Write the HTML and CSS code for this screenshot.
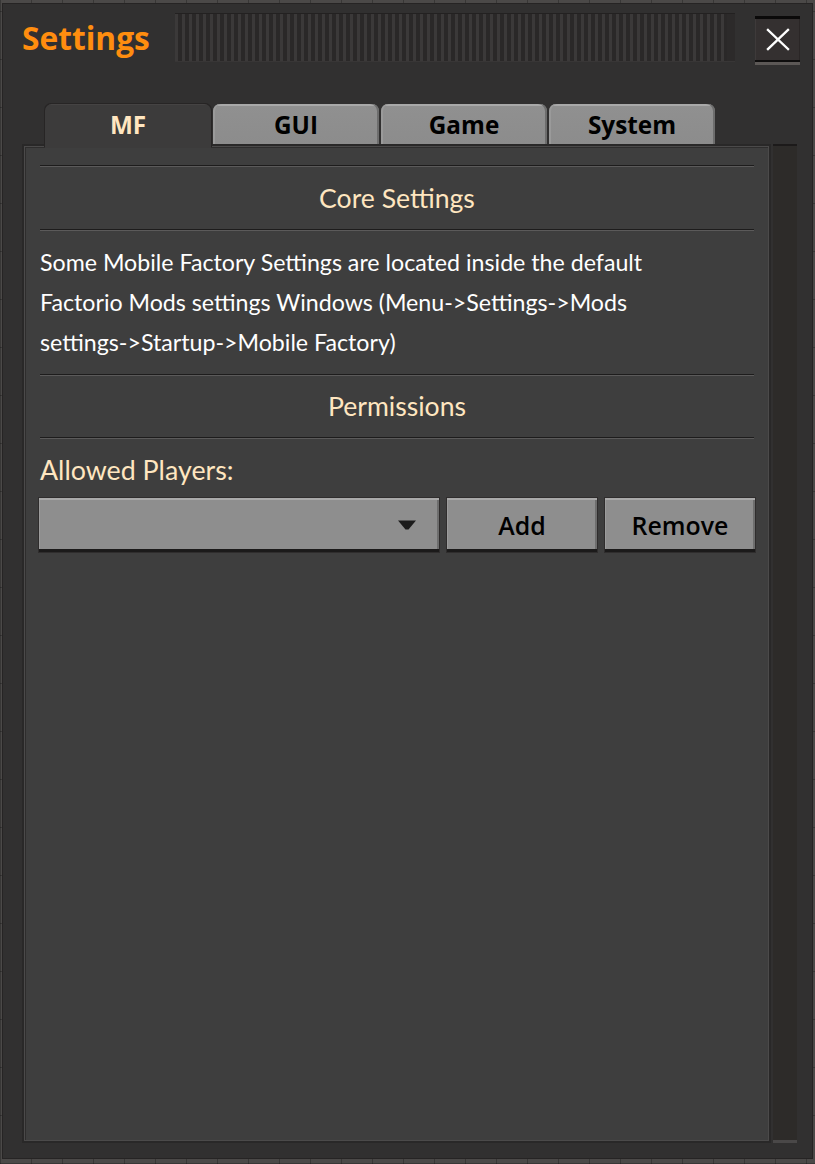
FILE: index.html
```html
<!DOCTYPE html>
<html lang="en">
<head>
<meta charset="utf-8">
<title>Settings</title>
<link rel="stylesheet" href="styles.css">
</head>
<body>
<div class="window">
  <header class="titlebar">
    <h1 class="title">Settings</h1>
    <div class="drag-handle"></div>
    <button class="close-btn" aria-label="Close">
      <svg width="24" height="24" viewBox="0 0 24 24"><path d="M2 2 L22 21 M22 2 L2 21" stroke="#ffffff" stroke-width="2.4" stroke-linecap="square" fill="none"/></svg>
    </button>
  </header>
  <nav class="tabs">
    <div class="tab active">MF</div>
    <div class="tab">GUI</div>
    <div class="tab">Game</div>
    <div class="tab">System</div>
  </nav>
  <div class="body-row">
    <section class="panel">
      <div class="sep"></div>
      <h2 class="section-title">Core Settings</h2>
      <div class="sep"></div>
      <p class="desc">Some Mobile Factory Settings are located inside the default Factorio Mods settings Windows (Menu-&gt;Settings-&gt;Mods settings-&gt;Startup-&gt;Mobile Factory)</p>
      <div class="sep"></div>
      <h2 class="section-title perm">Permissions</h2>
      <div class="sep"></div>
      <div class="label">Allowed Players:</div>
      <div class="controls">
        <div class="dropdown">
          <svg class="arrow" width="20" height="10" viewBox="0 0 20 10"><path d="M1 0.5 H19 L11.5 9.5 H8.5 Z" fill="#1c1c1c"/></svg>
        </div>
        <button class="btn">Add</button>
        <button class="btn">Remove</button>
      </div>
    </section>
    <div class="scroll-strip"></div>
  </div>
</div>
</body>
</html>
```
FILE: styles.css
```css
* { box-sizing: border-box; }

html, body { height: 100%; }

body {
  margin: 0;
  padding: 4px 3px 6px 3px;
  background-color: #4b4948;
  background-image:
    repeating-linear-gradient(90deg, rgba(0,0,0,0.25) 0 1px, transparent 1px 31px),
    repeating-linear-gradient(0deg, rgba(0,0,0,0.25) 0 1px, transparent 1px 48px);
  font-family: "Lato", "Open Sans", sans-serif;
}

.window {
  height: 1154px;
  background: #313030;
  display: flex;
  flex-direction: column;
  box-shadow: 0 0 0 1px #262424;
}

/* ---------- title bar ---------- */
.titlebar {
  display: flex;
  align-items: center;
  height: 58px;
  padding: 9px 12px 0 19px;
}

.title {
  margin: 0;
  font-family: "Open Sans", sans-serif;
  font-weight: 700;
  font-size: 31.7px;
  line-height: 49px;
  color: #ff8d0f;
  letter-spacing: 0;
}

.drag-handle {
  flex: 1;
  height: 49px;
  margin-left: 25px;
  margin-right: 20px;
  background-color: #2c2a2a;
  background-image: repeating-linear-gradient(90deg,
    #3b3939 0 3px, #2a2828 3px 7px);
  background-size: calc(100% - 8px) 100%;
  background-repeat: no-repeat;
  box-shadow: inset 0 1px 0 #232121, inset 0 -1px 0 #383636;
}

.close-btn {
  width: 45px;
  height: 46px;
  margin: 3px 0 0 0;
  padding: 0;
  display: flex;
  align-items: center;
  justify-content: center;
  background: #343030;
  border: none;
  border-top: 3px solid #0b0a0a;
  border-bottom: 2px solid #0e0d0d;
  box-shadow: 0 3px 0 #5c5856, inset 1px 0 0 #3e3a3a, inset -1px 0 0 #2a2626;
}

/* ---------- tabs ---------- */
.tabs {
  display: flex;
  gap: 2px;
  height: 40px;
  margin-top: 42px;
  padding-left: 42px;
}

.tab {
  width: 166px;
  height: 40px;
  border-radius: 7px 7px 0 0;
  background: linear-gradient(#a9a9a9 0 2px, #909090 2px, #8c8c8c 100%);
  box-shadow: inset 2px 0 0 #9a9a9a, inset -2px 0 0 #6d6d6d;
  font-family: "Open Sans", sans-serif;
  font-weight: 700;
  font-size: 24.3px;
  line-height: 41px;
  text-align: center;
  color: #000;
}

.tab.active {
  position: relative;
  z-index: 1;
  height: 44px;
  background: linear-gradient(#454343 0 1px, #3c3b3b 1px);
  box-shadow: -1px -1px 0 #272525, 1px -1px 0 #272525;
  color: #ffe6c0;
}

/* ---------- body ---------- */
.body-row {
  display: flex;
  height: 999px;
  padding-left: 19px;
}

.panel {
  width: 749px;
  height: 999px;
  background: #3e3e3e;
  border: 2px solid #292828;
  box-shadow: inset 1px 1px 0 #4b4a4a, inset -1px -1px 0 #4b4a4a, inset 2px 2px 0 #2e2d2d;
  padding: 19px 15px 0 16px;
  display: flex;
  flex-direction: column;
}

.scroll-strip {
  width: 24px;
  margin-left: 2px;
  height: 999px;
  background: #2d2b29;
  border-top: 2px solid #1c1a1a;
  box-shadow: inset 0 -3px 0 #4a4848;
}

.sep {
  height: 2px;
  border-top: 1px solid #1d1c1c;
  border-bottom: 1px solid #5b5a5a;
}

.section-title {
  margin: 0;
  height: 62px;
  font-family: "Lato", sans-serif;
  font-weight: 400;
  font-size: 26.6px;
  line-height: 62px;
  text-align: center;
  color: #ffe6c0;
}

.section-title.perm {
  height: 61px;
  line-height: 61px;
}

.desc {
  margin: 11px 0 12px 0;
  max-width: 660px;
  font-size: 23.2px;
  line-height: 40px;
  color: #ffffff;
}

.label {
  margin-top: 13px;
  font-size: 26.8px;
  line-height: 36px;
  color: #ffe6c0;
}

.controls {
  display: flex;
  gap: 8px;
  margin: 10px -1px 0 -1px;
  height: 54px;
}

.dropdown,
.btn {
  height: 54px;
  background: #8e8e8e;
  border: none;
  border-top: 2px solid #aaaaaa;
  border-bottom: 3px solid #1b1a1a;
  box-shadow: inset 1px 0 0 #9c9c9c, inset -2px 0 0 #6e6e6e, 0 0 0 1px #2f2d2d;
}

.dropdown {
  width: 400px;
  display: flex;
  align-items: center;
  justify-content: flex-end;
  padding-right: 22px;
}

.arrow { display: block; margin-top: 1px; }

.btn {
  width: 150px;
  padding: 0;
  font-family: "Open Sans", sans-serif;
  font-weight: 600;
  font-size: 24.9px;
  line-height: 46px;
  color: #000;
  text-align: center;
}
```
